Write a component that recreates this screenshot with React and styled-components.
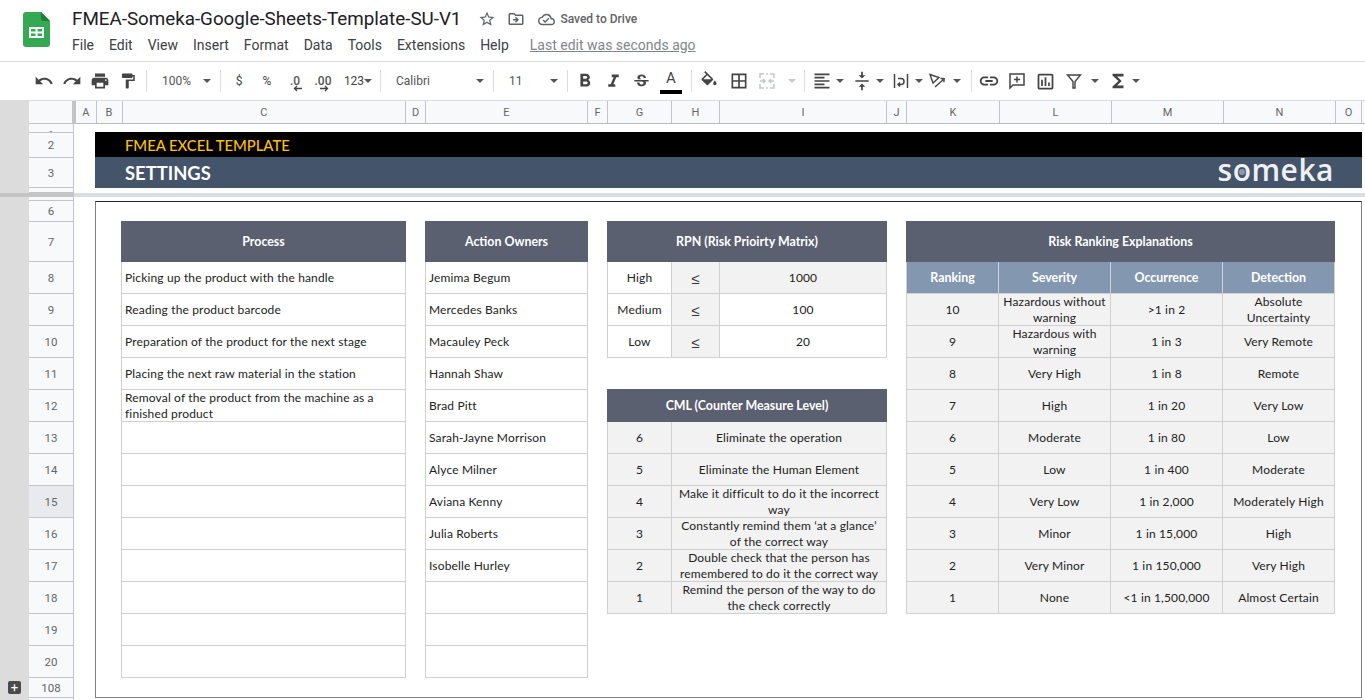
import React from "react";
import styled, { createGlobalStyle } from "styled-components";
import {
  MdUndo,
  MdRedo,
  MdPrint,
  MdFormatPaint,
  MdFormatBold,
  MdFormatItalic,
  MdStrikethroughS,
  MdBorderAll,
  MdFormatAlignLeft,
  MdVerticalAlignCenter,
  MdLink,
  MdOutlineInsertChart,
  MdFunctions,
  MdStarBorder,
  MdOutlineDriveFileMove,
  MdOutlineCloudDone,
} from "react-icons/md";

const GlobalStyle = createGlobalStyle`
  html, body { margin: 0; padding: 0; background: #fff; overflow: hidden; }
  * { box-sizing: border-box; }
`;

const Page = styled.div`
  width: 1365px;
  height: 700px;
  overflow: hidden;
  display: flex;
  flex-direction: column;
  font-family: Roboto, "Liberation Sans", sans-serif;
  background: #fff;
`;

/* title bar */
const TitleBar = styled.div`
  height: 61px;
  display: flex;
  align-items: flex-start;
  padding: 12px 0 0 23px;
  gap: 22px;
`;
const TitleColumn = styled.div`
  display: flex;
  flex-direction: column;
  margin-top: -5px;
`;
const TitleRow = styled.div`
  display: flex;
  align-items: center;
  height: 24px;
`;
const DocName = styled.div`
  font-size: 18.8px;
  color: #202124;
  white-space: nowrap;
`;
const TitleIcon = styled.span`
  display: flex;
  color: #5f6368;
  margin-left: ${(p) => p.$ml}px;
`;
const Saved = styled.span`
  margin-left: 5px;
  font-size: 12px;
  font-weight: 500;
  color: #5f6368;
`;
const MenuRow = styled.div`
  display: flex;
  align-items: center;
  height: 24px;
  margin-top: 2px;
  gap: 15px;
  font-size: 14px;
  color: #3c4043;
`;
const LastEdit = styled.span`
  margin-left: 6px;
  color: #80868b;
  text-decoration: underline;
`;

/* toolbar */
const Toolbar = styled.div`
  height: 39px;
  display: flex;
  align-items: center;
  padding-left: 30px;
  border-top: 1px solid #dadce0;
  color: #444;
`;
const Tool = styled.div`
  position: relative;
  width: ${(p) => p.$w || 28}px;
  margin-left: ${(p) => p.$ml || 0}px;
  height: 26px;
  display: flex;
  align-items: center;
  justify-content: center;
  color: ${(p) => (p.$muted ? "#c4c7cc" : "#444")};
  font-size: 12px;
`;
const Sep = styled.div`
  width: 1px;
  height: 22px;
  background: #dadce0;
  margin-left: ${(p) => p.$ml || 0}px;
`;
const Select = styled.div`
  width: ${(p) => p.$w}px;
  height: 26px;
  display: flex;
  align-items: center;
  justify-content: space-between;
  padding: 0 9px 0 15px;
  font-size: 12px;
  color: #555;
`;
const Caret = styled.span`
  width: 0;
  height: 0;
  border-left: 4px solid transparent;
  border-right: 4px solid transparent;
  border-top: 4px solid ${(p) => (p.$muted ? "#c4c7cc" : "#555")};
`;
const Decimal = styled.span`
  font-size: 12px;
  font-weight: 500;
  color: #555;
  margin-top: -1px;
`;
const DecimalArrow = styled.svg`
  position: absolute;
  left: ${(p) => p.$left}px;
  top: 17px;
`;
const ColorLetter = styled.span`
  font-size: 15px;
  color: #444;
  margin-top: -6px;
`;
const ColorBar = styled.span`
  position: absolute;
  left: 3px;
  right: 3px;
  bottom: 0;
  height: 4px;
  background: #000;
`;

/* sheet */
const ColumnBar = styled.div`
  height: 24px;
  display: flex;
  background: #dcdcdc;
  border-top: 1px solid #dadce0;
`;
const Corner = styled.div`
  width: 43px;
  margin-left: 29px;
  background: #f8f9fa;
  border-bottom: 1px solid #c0c4cc;
`;
const FreezeHandle = styled.div`
  width: 4px;
  background: #c4c4c4;
`;
const ColumnHeads = styled.div`
  flex: 1;
  display: flex;
  background: #f8f9fa;
  border-bottom: 1px solid #b8bcc2;
`;
const ColumnHead = styled.div`
  width: ${(p) => p.$w}px;
  display: flex;
  align-items: center;
  justify-content: center;
  font-size: 11px;
  color: #666;
  border-right: 1px solid #c0c4cc;
`;
const SheetBody = styled.div`
  position: relative;
  flex: 1;
  display: flex;
  min-height: 0;
`;
const Rail = styled.div`
  width: 74px;
  flex: none;
  display: flex;
  flex-direction: column;
  background: #dcdcdc;
`;
const RowHead = styled.div`
  width: 45px;
  margin-left: 29px;
  height: ${(p) => p.$h}px;
  flex: none;
  display: flex;
  align-items: ${(p) => (p.$clip ? "flex-start" : "center")};
  padding-top: ${(p) => (p.$clip ? 4 : 0)}px;
  justify-content: center;
  font-size: 11.5px;
  color: #666;
  overflow: hidden;
  background: ${(p) => (p.$active ? "#e8eaed" : "#f8f9fa")};
  border-right: 1px solid #c0c4cc;
  border-bottom: 1px solid #c0c4cc;
`;
const RailFreeze = styled.div`
  height: 4px;
  flex: none;
  background: #c4c4c4;
`;
const AddSheet = styled.div`
  position: absolute;
  left: 8px;
  top: 557px;
  width: 13px;
  height: 13px;
  border-radius: 2px;
  background: #4a4a4a;
  color: #fff;
  display: flex;
  align-items: center;
  justify-content: center;
  font-size: 13px;
  line-height: 1;
`;
const Canvas = styled.div`
  flex: 1;
  display: flex;
  flex-direction: column;
  padding-top: 8px;
  font-family: Lato, "Open Sans", sans-serif;
`;
const BlackBanner = styled.div`
  height: 25px;
  margin: 0 3px 0 21px;
  padding-left: 30px;
  display: flex;
  align-items: center;
  background: #000;
  color: #ffc000;
  font-size: 14.8px;
  font-weight: 500;
`;
const BlueBanner = styled.div`
  height: 31px;
  margin: 0 3px 0 21px;
  padding: 0 28px 0 30px;
  display: flex;
  align-items: center;
  justify-content: space-between;
  background: #44546a;
  color: #fff;
  font-size: 18.4px;
  font-weight: 700;
`;
const Logo = styled.div`
  font-family: "Open Sans", sans-serif;
  font-size: 30px;
  font-weight: 600;
  letter-spacing: 0.5px;
  color: #eef0f2;
  line-height: 1;
  margin-top: -5px;
`;
const LogoO = styled.span`
  position: relative;
  &::after {
    content: "";
    position: absolute;
    left: 6px;
    top: 50%;
    margin-top: -1px;
    width: 6px;
    height: 6px;
    border-radius: 50%;
    background: #8f9aaa;
  }
`;
const FreezeLine = styled.div`
  height: 4px;
  margin-top: 5px;
  background: #dadde6;
`;
const Frame = styled.div`
  width: 1267px;
  height: 497px;
  margin: 4px 0 0 21px;
  padding: 19px 25px;
  display: flex;
  align-items: flex-start;
  gap: 19px;
  border: 1px solid #808080;
  border-top-color: #222;
  background: #fff;
`;
const MiddleStack = styled.div`
  display: flex;
  flex-direction: column;
  gap: 31px;
`;
const Table = styled.div`
  display: grid;
  grid-template-columns: ${(p) => p.$cols};
  grid-template-rows: ${(p) => p.$head}px;
  grid-auto-rows: 32px;
  border-left: 1px solid #d0d0d0;
`;
const TableHead = styled.div`
  grid-column: 1 / -1;
  margin-left: -1px;
  display: flex;
  align-items: center;
  justify-content: center;
  background: #5a6070;
  color: #fff;
  font-size: 12.4px;
  font-weight: 700;
`;
const SubHead = styled.div`
  display: flex;
  align-items: center;
  justify-content: center;
  background: #8497b0;
  color: #fff;
  font-size: 12.4px;
  font-weight: 700;
  border-right: 1px solid #d0d0d0;
  border-bottom: 1px solid #d0d0d0;
`;
const Cell = styled.div`
  display: flex;
  align-items: center;
  justify-content: ${(p) => (p.$left ? "flex-start" : "center")};
  text-align: ${(p) => (p.$left ? "left" : "center")};
  padding: 0 3px;
  background: ${(p) => (p.$shade ? "#f2f2f2" : "#fff")};
  color: #222;
  font-size: 12px;
  line-height: 16px;
  letter-spacing: 0.15px;
  border-right: 1px solid #d0d0d0;
  border-bottom: 1px solid #d0d0d0;
`;
const Lte = styled.span`
  font-family: "Noto Sans", sans-serif;
  font-size: 15px;
  color: #333;
`;

const SheetsLogo = () => (
  <svg width="27" height="35" viewBox="0 0 27 35">
    <path
      d="M3 0h15l9 9v23a3 3 0 0 1-3 3H3a3 3 0 0 1-3-3V3a3 3 0 0 1 3-3z"
      fill="#34a853"
    />
    <path d="M18 0l9 9h-7a2 2 0 0 1-2-2z" fill="#1e7e3c" />
    <path
      d="M6 15h15v11H6zM8 17v2.500h4.500V17zM14.500 17v2.500H19V17zM8 21.500V24h4.500v-2.500zM14.500 21.500V24H19v-2.500z"
      fill="#fff"
      fillRule="evenodd"
    />
  </svg>
);

const FillIcon = () => (
  <svg width="20" height="20" viewBox="0 0 24 24" fill="#444">
    <path d="M16.560 8.940L7.620 0 6.210 1.410l2.380 2.380-5.150 5.150c-.59.59-.59 1.540 0 2.120l5.500 5.500c.29.29.68.44 1.060.44s.77-.15 1.060-.44l5.500-5.500c.59-.58.59-1.530 0-2.120zM5.210 10L10 5.210 14.790 10H5.210zM19 11.500s-2 2.170-2 3.500c0 1.100.9 2 2 2s2-.9 2-2c0-1.330-2-3.500-2-3.500z" />
  </svg>
);

const MergeIcon = () => (
  <svg width="18" height="18" viewBox="0 0 18 18" fill="none" stroke="#c4c7cc" strokeWidth="1.500">
    <path d="M2 6V2h4M8 2h2M12 2h4v4M2 12v4h4M8 16h2M12 16h4v-4" />
    <path d="M2 9h5M11 9h5M5 7l2 2-2 2M13 7l-2 2 2 2" />
  </svg>
);

const WrapIcon = () => (
  <svg width="18" height="18" viewBox="0 0 18 18" fill="none" stroke="#444" strokeWidth="1.500">
    <path d="M2.500 2v14M15.500 2v14" />
    <path d="M6 12.500h3a2.800 2.800 0 0 0 0-6H6M8 10.500l-2 2 2 2" />
  </svg>
);

const RotateIcon = () => (
  <svg width="18" height="16" viewBox="0 0 18 16" fill="none" stroke="#444" strokeWidth="1.400">
    <path d="M2 1.500l9 3-6 5.500z" />
    <path d="M7 14l9-8M12.500 5.500l3.700.2-.3 3.600" />
  </svg>
);

const CommentIcon = () => (
  <svg width="18" height="18" viewBox="0 0 18 18" fill="none" stroke="#444" strokeWidth="1.500">
    <path d="M2 2h14v11H5l-3 3z" />
    <path d="M9 4.500v6M6 7.500h6" />
  </svg>
);

const FilterIcon = () => (
  <svg width="18" height="18" viewBox="0 0 18 18" fill="none" stroke="#444" strokeWidth="1.400">
    <path d="M2.500 3h13L10 9.500V16H8V9.500z" />
  </svg>
);

const Arrow = ({ left, right }) => (
  <DecimalArrow $left={left} width="9" height="7" viewBox="0 0 9 7" fill="none" stroke="#444" strokeWidth="1.300">
    {right ? <path d="M0 3.500h7M5 1l2.500 2.500L5 6" /> : <path d="M9 3.500H2M4 1L1.500 3.500 4 6" />}
  </DecimalArrow>
);

const columns = [
  ["A", 20.5],
  ["B", 26],
  ["C", 283.5],
  ["D", 20],
  ["E", 162],
  ["F", 20],
  ["G", 64],
  ["H", 48],
  ["I", 167],
  ["J", 20],
  ["K", 93],
  ["L", 112],
  ["M", 112],
  ["N", 112],
  ["O", 26],
];

const rowsTop = [
  ["1", 9],
  ["2", 25],
  ["3", 30],
  ["", 5],
];
const rowsBottom = [
  ["", 4],
  ["6", 21],
  ["7", 40],
  ["8", 32],
  ["9", 32],
  ["10", 32],
  ["11", 32],
  ["12", 32],
  ["13", 32],
  ["14", 32],
  ["15", 32],
  ["16", 32],
  ["17", 32],
  ["18", 32],
  ["19", 32],
  ["20", 32],
  ["108", 20],
  ["", 10],
];

const processes = [
  "Picking up the product with the handle",
  "Reading the product barcode",
  "Preparation of the product for the next stage",
  "Placing the next raw material in the station",
  "Removal of the product from the machine as a finished product",
  "", "", "", "", "", "", "", "",
];
const owners = [
  "Jemima Begum",
  "Mercedes Banks",
  "Macauley Peck",
  "Hannah Shaw",
  "Brad Pitt",
  "Sarah-Jayne Morrison",
  "Alyce Milner",
  "Aviana Kenny",
  "Julia Roberts",
  "Isobelle Hurley",
  "", "", "",
];
const rpn = [
  ["High", "1000", true],
  ["Medium", "100", false],
  ["Low", "20", false],
];
const cml = [
  ["6", "Eliminate the operation"],
  ["5", "Eliminate the Human Element"],
  ["4", "Make it difficult to do it the incorrect way"],
  ["3", "Constantly remind them ‘at a glance’ of the correct way"],
  ["2", "Double check that the person has remembered to do it the correct way"],
  ["1", "Remind the person of the way to do the check correctly"],
];
const ranking = [
  ["10", "Hazardous without warning", ">1 in 2", "Absolute Uncertainty"],
  ["9", "Hazardous with warning", "1 in 3", "Very Remote"],
  ["8", "Very High", "1 in 8", "Remote"],
  ["7", "High", "1 in 20", "Very Low"],
  ["6", "Moderate", "1 in 80", "Low"],
  ["5", "Low", "1 in 400", "Moderate"],
  ["4", "Very Low", "1 in 2,000", "Moderately High"],
  ["3", "Minor", "1 in 15,000", "High"],
  ["2", "Very Minor", "1 in 150,000", "Very High"],
  ["1", "None", "<1 in 1,500,000", "Almost Certain"],
];

const App = () => (
  <Page>
    <GlobalStyle />
    <TitleBar>
      <SheetsLogo />
      <TitleColumn>
        <TitleRow>
          <DocName>FMEA-Someka-Google-Sheets-Template-SU-V1</DocName>
          <TitleIcon $ml={17}><MdStarBorder size={18} /></TitleIcon>
          <TitleIcon $ml={11}><MdOutlineDriveFileMove size={18} /></TitleIcon>
          <TitleIcon $ml={13}><MdOutlineCloudDone size={17} /></TitleIcon>
          <Saved>Saved to Drive</Saved>
        </TitleRow>
        <MenuRow>
          {["File", "Edit", "View", "Insert", "Format", "Data", "Tools", "Extensions", "Help"].map((m) => (
            <span key={m}>{m}</span>
          ))}
          <LastEdit>Last edit was seconds ago</LastEdit>
        </MenuRow>
      </TitleColumn>
    </TitleBar>

    <Toolbar>
      <Tool><MdUndo size={20} /></Tool>
      <Tool><MdRedo size={20} /></Tool>
      <Tool><MdPrint size={20} /></Tool>
      <Tool><MdFormatPaint size={18} /></Tool>
      <Sep $ml={4} />
      <Select $w={73}>100%<Caret /></Select>
      <Sep />
      <Tool $ml={4}>$</Tool>
      <Tool>%</Tool>
      <Tool><Decimal>.0</Decimal><Arrow left={12} /></Tool>
      <Tool><Decimal>.00</Decimal><Arrow left={11} right /></Tool>
      <Tool $w={42}>123<Caret /></Tool>
      <Sep $ml={1} />
      <Select $w={112}>Calibri<Caret /></Select>
      <Sep />
      <Select $w={73}>11<Caret /></Select>
      <Sep />
      <Tool $ml={3}><MdFormatBold size={22} /></Tool>
      <Tool><MdFormatItalic size={21} /></Tool>
      <Tool><MdStrikethroughS size={19} /></Tool>
      <Tool $ml={2}><ColorLetter>A</ColorLetter><ColorBar /></Tool>
      <Sep $ml={6} />
      <Tool $ml={3}><FillIcon /></Tool>
      <Tool $ml={2}><MdBorderAll size={20} /></Tool>
      <Tool $muted><MergeIcon /></Tool>
      <Tool $w={16} $ml={3}><Caret $muted /></Tool>
      <Sep $ml={4} />
      <Tool $ml={3}><MdFormatAlignLeft size={20} /></Tool>
      <Tool $w={8}><Caret /></Tool>
      <Tool $ml={4}><MdVerticalAlignCenter size={20} /></Tool>
      <Tool $w={8}><Caret /></Tool>
      <Tool $ml={3}><WrapIcon /></Tool>
      <Tool $w={8}><Caret /></Tool>
      <Tool><RotateIcon /></Tool>
      <Tool $w={12}><Caret /></Tool>
      <Sep $ml={8} />
      <Tool $ml={3}><MdLink size={22} /></Tool>
      <Tool><CommentIcon /></Tool>
      <Tool><MdOutlineInsertChart size={21} /></Tool>
      <Tool $ml={1}><FilterIcon /></Tool>
      <Tool $w={14}><Caret /></Tool>
      <Tool $ml={2}><MdFunctions size={22} /></Tool>
      <Tool $w={8}><Caret /></Tool>
    </Toolbar>

    <ColumnBar>
      <Corner />
      <FreezeHandle />
      <ColumnHeads>
        {columns.map(([name, w]) => (
          <ColumnHead key={name} $w={w}>{name}</ColumnHead>
        ))}
      </ColumnHeads>
    </ColumnBar>

    <SheetBody>
      <Rail>
        {rowsTop.map(([label, h], i) => (
          <RowHead key={i} $h={h} $clip={h === 9}>{label}</RowHead>
        ))}
        <RailFreeze />
        {rowsBottom.map(([label, h], i) => (
          <RowHead key={i} $h={h} $active={label === "15"}>{label}</RowHead>
        ))}
      </Rail>
      <AddSheet>+</AddSheet>

      <Canvas>
        <BlackBanner>FMEA EXCEL TEMPLATE</BlackBanner>
        <BlueBanner>
          SETTINGS
          <Logo>s<LogoO>o</LogoO>meka</Logo>
        </BlueBanner>
        <FreezeLine />
        <Frame>
          <Table $cols="284px" $head={41}>
            <TableHead>Process</TableHead>
            {processes.map((text, i) => (
              <Cell key={i} $left>{text}</Cell>
            ))}
          </Table>

          <Table $cols="162px" $head={41}>
            <TableHead>Action Owners</TableHead>
            {owners.map((text, i) => (
              <Cell key={i} $left>{text}</Cell>
            ))}
          </Table>

          <MiddleStack>
            <Table $cols="64px 48px 167px" $head={41}>
              <TableHead>RPN (Risk Prioirty Matrix)</TableHead>
              {rpn.map(([level, value, shaded]) => (
                <React.Fragment key={level}>
                  <Cell>{level}</Cell>
                  <Cell $shade><Lte>≤</Lte></Cell>
                  <Cell $shade={shaded}>{value}</Cell>
                </React.Fragment>
              ))}
            </Table>
            <Table $cols="64px 215px" $head={33}>
              <TableHead>CML (Counter Measure Level)</TableHead>
              {cml.map(([level, text]) => (
                <React.Fragment key={level}>
                  <Cell $shade>{level}</Cell>
                  <Cell $shade>{text}</Cell>
                </React.Fragment>
              ))}
            </Table>
          </MiddleStack>

          <Table $cols="92px 112px 112px 112px" $head={41}>
            <TableHead>Risk Ranking Explanations</TableHead>
            {["Ranking", "Severity", "Occurrence", "Detection"].map((h) => (
              <SubHead key={h}>{h}</SubHead>
            ))}
            {ranking.map((row) => (
              <React.Fragment key={row[0]}>
                {row.map((text, i) => (
                  <Cell key={i} $shade>{text}</Cell>
                ))}
              </React.Fragment>
            ))}
          </Table>
        </Frame>
      </Canvas>
    </SheetBody>
  </Page>
);

export default App;
